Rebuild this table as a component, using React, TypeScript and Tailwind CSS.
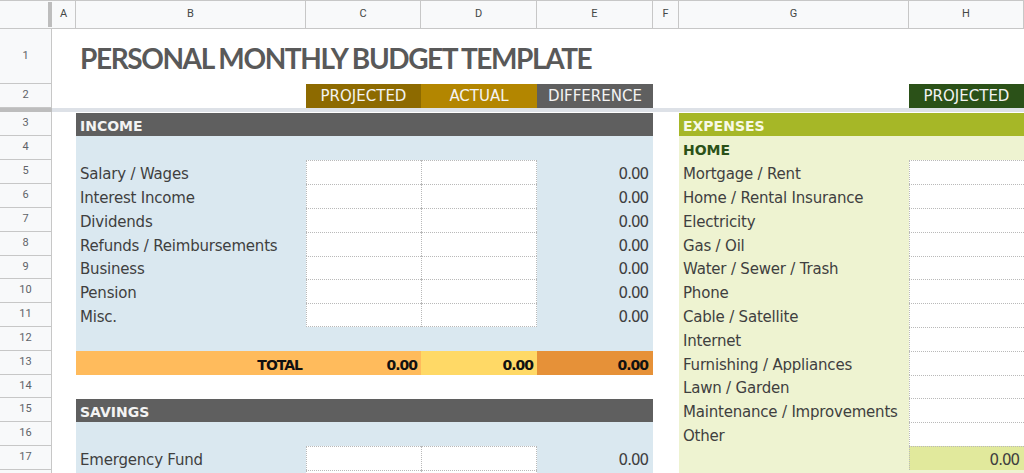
import React from 'react';

const A = 'w-[24px] shrink-0';
const B = 'w-[230px] shrink-0';
const C = 'w-[115px] shrink-0';
const D = 'w-[116px] shrink-0';
const E = 'w-[116px] shrink-0';
const F = 'w-[26px] shrink-0';
const G = 'w-[230px] shrink-0';
const H = 'flex-1 min-w-0';

const label = 'flex items-end pb-px pl-[4px] leading-[18px] text-[15px] text-[#3f3f3f] whitespace-nowrap tracking-[-0.2px]';
const num = 'flex items-end justify-end pb-px pr-[5px] leading-[18px] text-[15px] text-[#3f3f3f] tracking-[-1px]';
const input = 'bg-white border-t border-l border-dotted border-[#b9b9b9]';

const income = [
  'Salary / Wages',
  'Interest Income',
  'Dividends',
  'Refunds / Reimbursements',
  'Business',
  'Pension',
  'Misc.',
];

const expenses = [
  'Mortgage / Rent',
  'Home / Rental Insurance',
  'Electricity',
  'Gas / Oil',
  'Water / Sewer / Trash',
  'Phone',
  'Cable / Satellite',
  'Internet',
  'Furnishing / Appliances',
  'Lawn / Garden',
  'Maintenance / Improvements',
  'Other',
];

// row heights for rows 4..18
const heights = [
  'h-[24px]', 'h-[24px]', 'h-[24px]', 'h-[24px]', 'h-[24px]', 'h-[23px]', 'h-[24px]',
  'h-[24px]', 'h-[24px]', 'h-[24px]', 'h-[23px]', 'h-[24px]', 'h-[24px]', 'h-[24px]', 'h-[24px]',
];

const Row: React.FC<{ n?: number; h: string; children: React.ReactNode }> = ({ n, h, children }) => (
  <div className={`flex ${h}`}>
    <div className="w-[52px] shrink-0 bg-[#f8f9fa] border-r border-b border-[#c7c7c7] flex items-center justify-center text-[11px] text-[#5f6368] font-['Roboto']">
      {n}
    </div>
    {children}
  </div>
);

const ColHead: React.FC<{ w: string; l: string }> = ({ w, l }) => (
  <div className={`${w} border-r border-[#c7c7c7] flex items-center justify-center`}>{l}</div>
);

export default function App() {
  return (
    <div className="w-[1024px] h-[473px] overflow-hidden bg-white font-['DejaVu_Sans',sans-serif]">
      {/* column headers */}
      <div className="flex h-[29px] bg-[#f8f9fa] border-t border-b border-[#c7c7c7] text-[11px] text-[#444746] font-['Roboto']">
        <div className="w-[52px] shrink-0 flex justify-end py-[1px]">
          <div className="w-[4px] bg-[#bdbdbd]" />
        </div>
        <ColHead w={A} l="A" />
        <ColHead w={B} l="B" />
        <ColHead w={C} l="C" />
        <ColHead w={D} l="D" />
        <ColHead w={E} l="E" />
        <ColHead w={F} l="F" />
        <ColHead w={G} l="G" />
        <ColHead w={H} l="H" />
      </div>

      {/* row 1 */}
      <Row n={1} h="h-[55px]">
        <div className={A} />
        <div className="flex-1 flex items-center pl-[4px] pt-[2px]">
          <span className="font-['Lato'] font-bold text-[28px] tracking-[-1.4px] text-[#595959] whitespace-nowrap">
            PERSONAL MONTHLY BUDGET TEMPLATE
          </span>
        </div>
      </Row>

      {/* row 2 */}
      <Row n={2} h="h-[24px]">
        <div className={A} />
        <div className={B} />
        <div className={`${C} bg-[#8d6a00] flex items-center justify-center text-[15px] text-[#f3f3f3] leading-[18px]`}>PROJECTED</div>
        <div className={`${D} bg-[#b38600] flex items-center justify-center text-[15px] text-[#f3f3f3] leading-[18px]`}>ACTUAL</div>
        <div className={`${E} bg-[#5f5f5f] flex items-center justify-center text-[15px] text-[#f3f3f3] leading-[18px]`}>DIFFERENCE</div>
        <div className={F} />
        <div className={G} />
        <div className={`${H} bg-[#2b5118] flex items-center justify-center text-[15px] text-[#f3f3f3] leading-[18px]`}>PROJECTED</div>
      </Row>

      {/* freeze bar */}
      <div className="flex h-[4px]">
        <div className="w-[52px] shrink-0 bg-[#bdbdbd]" />
        <div className="flex-1 bg-[#dde1e7]" />
      </div>

      {/* row 3 */}
      <Row n={3} h="h-[24px]">
        <div className={A} />
        <div className="w-[577px] shrink-0 mt-px bg-[#5f5f5f] flex items-end pb-px pl-[4px] leading-[18px] text-[14px] font-bold text-[#f3f3f3]">INCOME</div>
        <div className={F} />
        <div className="flex-1 mt-px bg-[#a6b727] flex items-end pb-px pl-[4px] leading-[18px] text-[14px] font-bold text-[#f7f9e6]">EXPENSES</div>
      </Row>

      {/* row 4 */}
      <Row n={4} h={heights[0]}>
        <div className={A} />
        <div className="w-[577px] shrink-0 bg-[#dae8f0]" />
        <div className={F} />
        <div className={`${G} bg-[#eef3d1] flex items-end pb-px pl-[4px] leading-[18px] text-[14px] font-bold text-[#2b5118]`}>HOME</div>
        <div className={`${H} bg-[#eef3d1]`} />
      </Row>

      {/* rows 5-11 */}
      {income.map((item, i) => (
        <Row key={item} n={5 + i} h={heights[1 + i]}>
          <div className={A} />
          <div className={`${B} bg-[#dae8f0] ${label}`}>{item}</div>
          <div className={`${C} ${input} ${i === 6 ? 'border-b' : ''}`} />
          <div className={`${D} ${input} border-r ${i === 6 ? 'border-b' : ''}`} />
          <div className={`${E} bg-[#dae8f0] ${num}`}>0.00</div>
          <div className={F} />
          <div className={`${G} bg-[#eef3d1] ${label}`}>{expenses[i]}</div>
          <div className={`${H} ${input}`} />
        </Row>
      ))}

      {/* row 12 */}
      <Row n={12} h={heights[8]}>
        <div className={A} />
        <div className="w-[577px] shrink-0 bg-[#dae8f0]" />
        <div className={F} />
        <div className={`${G} bg-[#eef3d1] ${label}`}>{expenses[7]}</div>
        <div className={`${H} ${input}`} />
      </Row>

      {/* row 13 */}
      <Row n={13} h={heights[9]}>
        <div className={A} />
        <div className={`${B} bg-[#ffbb5c] flex items-end justify-end pb-px pr-[4px] leading-[18px] text-[14px] font-bold text-[#111] tracking-[-1px]`}>TOTAL</div>
        <div className={`${C} bg-[#ffbb5c] flex items-end justify-end pb-px pr-[4px] leading-[18px] text-[14px] font-bold text-[#111] tracking-[-1px]`}>0.00</div>
        <div className={`${D} bg-[#ffd966] flex items-end justify-end pb-px pr-[4px] leading-[18px] text-[14px] font-bold text-[#111] tracking-[-1px]`}>0.00</div>
        <div className={`${E} bg-[#e69138] flex items-end justify-end pb-px pr-[5px] leading-[18px] text-[14px] font-bold text-[#111] tracking-[-1px]`}>0.00</div>
        <div className={F} />
        <div className={`${G} bg-[#eef3d1] ${label}`}>{expenses[8]}</div>
        <div className={`${H} ${input}`} />
      </Row>

      {/* row 14 */}
      <Row n={14} h={heights[10]}>
        <div className={A} />
        <div className="w-[577px] shrink-0" />
        <div className={F} />
        <div className={`${G} bg-[#eef3d1] ${label}`}>{expenses[9]}</div>
        <div className={`${H} ${input}`} />
      </Row>

      {/* row 15 */}
      <Row n={15} h={heights[11]}>
        <div className={A} />
        <div className="w-[577px] shrink-0 mt-px bg-[#5f5f5f] flex items-end pb-px pl-[4px] leading-[18px] text-[14px] font-bold text-[#f3f3f3]">SAVINGS</div>
        <div className={F} />
        <div className={`${G} bg-[#eef3d1] ${label}`}>{expenses[10]}</div>
        <div className={`${H} ${input}`} />
      </Row>

      {/* row 16 */}
      <Row n={16} h={heights[12]}>
        <div className={A} />
        <div className="w-[577px] shrink-0 bg-[#dae8f0]" />
        <div className={F} />
        <div className={`${G} bg-[#eef3d1] ${label}`}>{expenses[11]}</div>
        <div className={`${H} ${input}`} />
      </Row>

      {/* row 17 */}
      <Row n={17} h={heights[13]}>
        <div className={A} />
        <div className={`${B} bg-[#dae8f0] ${label}`}>Emergency Fund</div>
        <div className={`${C} ${input}`} />
        <div className={`${D} ${input} border-r`} />
        <div className={`${E} bg-[#dae8f0] ${num}`}>0.00</div>
        <div className={F} />
        <div className={`${G} bg-[#eef3d1]`} />
        <div className={`${H} bg-[#e1e99c] border-t border-l border-dotted border-[#b9b9b9] ${num} pr-[4px]`}>0.00</div>
      </Row>

      {/* row 18, only its top edge shows */}
      <Row h={heights[14]}>
        <div className={A} />
        <div className={`${B} bg-[#dae8f0]`} />
        <div className={`${C} ${input}`} />
        <div className={`${D} ${input} border-r`} />
        <div className={`${E} bg-[#dae8f0]`} />
        <div className={F} />
        <div className={`${G} bg-[#eef3d1]`} />
        <div className={`${H} bg-[#eef3d1]`} />
      </Row>
    </div>
  );
}
